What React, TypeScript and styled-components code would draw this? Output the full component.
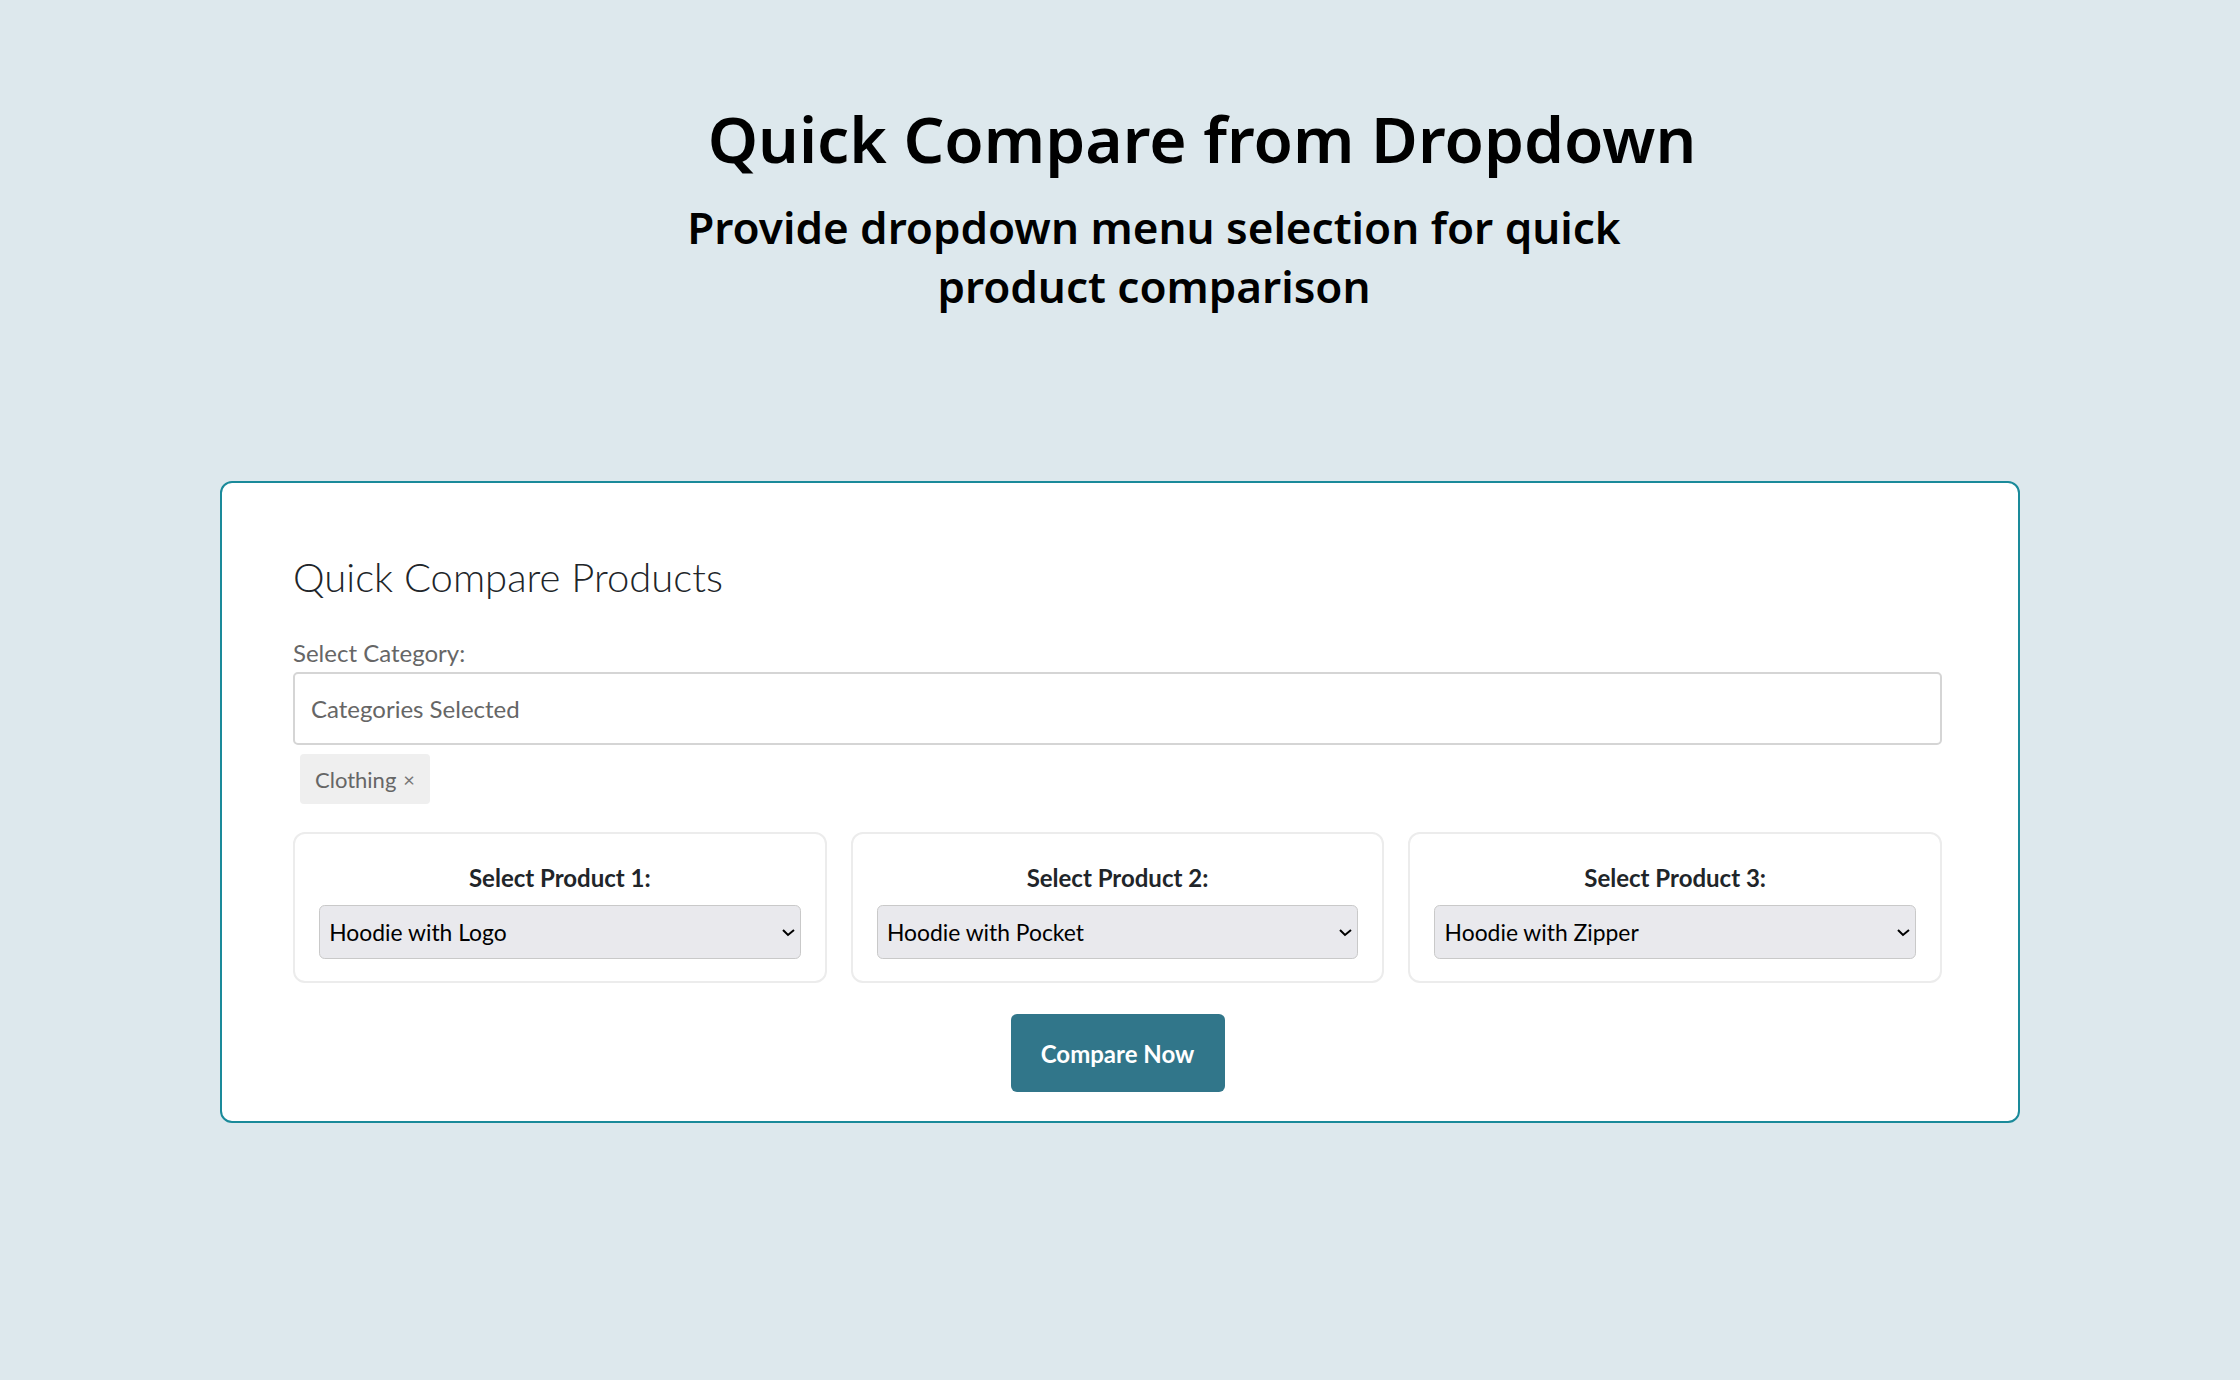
import React from "react";
import styled, { createGlobalStyle } from "styled-components";

const Global = createGlobalStyle`
  html, body { margin: 0; padding: 0; }
  body { background: #dde8ed; font-family: "Lato", "Liberation Sans", sans-serif; }
  * { box-sizing: border-box; }
`;

const Page = styled.main`
  width: 2240px;
  height: 1380px;
  padding-top: 100px;
  background: #dde8ed;
  overflow: hidden;
`;

const Header = styled.header`
  display: flex;
  flex-direction: column;
  height: 381px;
`;

const Title = styled.h1`
  margin: 0 0 0 164px;
  font-family: "Noto Sans", sans-serif;
  font-size: 64px;
  line-height: 78px;
  font-weight: 600;
  color: #000;
  text-align: center;
`;

const Subtitle = styled.h2`
  margin: 20px 0 0 684px;
  width: 940px;
  font-family: "Noto Sans", sans-serif;
  font-size: 44px;
  line-height: 58.5px;
  font-weight: 600;
  color: #000;
  text-align: center;
`;

const Card = styled.section`
  width: 1800px;
  margin: 0 auto;
  padding: 64px 76px 29px 71px;
  background: #fff;
  border: 2px solid #1a8a9a;
  border-radius: 12px;
`;

const Heading = styled.h3`
  margin: 0;
  font-size: 40px;
  line-height: 60px;
  font-weight: 300;
  color: #212529;
`;

const FieldLabel = styled.label`
  display: block;
  margin: 32px 0 5px;
  font-size: 24px;
  line-height: 28px;
  color: #666;
`;

const CategoryInput = styled.input`
  display: block;
  width: 100%;
  height: 73px;
  padding: 0 16px;
  font: inherit;
  font-size: 24px;
  color: #666;
  background: #fff;
  border: 2px solid #d5d5d5;
  border-radius: 5px;
  outline: none;
  &::placeholder { color: #666; opacity: 1; }
`;

const Chip = styled.div`
  display: inline-flex;
  align-items: center;
  gap: 7px;
  height: 50px;
  margin: 9px 0 0 7px;
  padding: 0 15px;
  font-size: 22px;
  color: #666;
  background: #efefef;
  border-radius: 4px;
`;

const ChipClose = styled.span`
  font-size: 20px;
  line-height: 1;
  color: #777;
`;

const ProductGrid = styled.div`
  display: grid;
  grid-template-columns: repeat(3, 1fr);
  gap: 24px;
  margin-top: 28px;
`;

const ProductCard = styled.div`
  height: 151px;
  padding: 30px 24px 0;
  border: 2px solid #ececec;
  border-radius: 12px;
  text-align: center;
`;

const ProductLabel = styled.label`
  display: block;
  margin-bottom: 13px;
  font-size: 24px;
  line-height: 28px;
  font-weight: 700;
  color: #212529;
`;

const ProductSelect = styled.select`
  display: block;
  zoom: 1.4286;
  width: 100%;
  height: 38px;
  padding: 0 3px;
  font-family: "Lato", sans-serif;
  font-size: 16px;
  color: #000;
  background-color: #e9e9ed;
  border: 1px solid #c9c9c9;
  border-radius: 4px;
`;

const Actions = styled.div`
  display: flex;
  justify-content: center;
  margin-top: 31px;
`;

const CompareButton = styled.button`
  width: 214px;
  height: 78px;
  padding: 0;
  font: inherit;
  font-size: 24px;
  font-weight: 700;
  color: #fff;
  background: #31768a;
  border: none;
  border-radius: 6px;
`;

const products = [
  { label: "Select Product 1:", value: "Hoodie with Logo" },
  { label: "Select Product 2:", value: "Hoodie with Pocket" },
  { label: "Select Product 3:", value: "Hoodie with Zipper" },
];
const options = ["Hoodie with Logo", "Hoodie with Pocket", "Hoodie with Zipper"];

export default function App() {
  return (
    <Page>
      <Global />
      <Header>
        <Title>Quick Compare from Dropdown</Title>
        <Subtitle>Provide dropdown menu selection for quick product comparison</Subtitle>
      </Header>
      <Card>
        <Heading>Quick Compare Products</Heading>
        <FieldLabel htmlFor="category">Select Category:</FieldLabel>
        <CategoryInput id="category" placeholder="Categories Selected" readOnly />
        <Chip>
          Clothing <ChipClose>×</ChipClose>
        </Chip>
        <ProductGrid>
          {products.map((p) => (
            <ProductCard key={p.label}>
              <ProductLabel>{p.label}</ProductLabel>
              <ProductSelect defaultValue={p.value}>
                {options.map((o) => (
                  <option key={o}>{o}</option>
                ))}
              </ProductSelect>
            </ProductCard>
          ))}
        </ProductGrid>
        <Actions>
          <CompareButton>Compare Now</CompareButton>
        </Actions>
      </Card>
    </Page>
  );
}
